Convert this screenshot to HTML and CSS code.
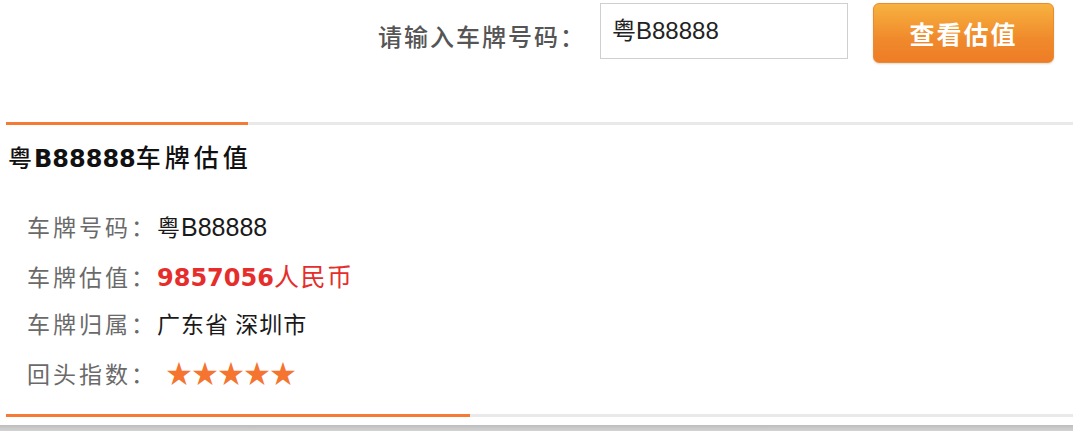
FILE: index.html
```html
<!DOCTYPE html>
<html lang="zh-CN">
<head>
<meta charset="utf-8">
<title>车牌估值</title>
<link rel="stylesheet" href="styles.css">
</head>
<body>
<div class="page">
  <div class="search">
    <span class="search-label">请输入车牌号码：</span>
    <div class="search-input">粤B88888</div>
    <button class="search-btn" type="button">查看估值</button>
  </div>

  <div class="panel">
    <div class="divider"><div class="divider-fill divider-fill-short"></div></div>
    <h1 class="title"><span class="cjk-tight">粤</span><span class="latin-bold">B88888</span><span class="cjk">车牌估值</span></h1>
    <ul class="rows">
      <li class="row"><span class="row-label">车牌号码：</span><span class="row-value"><span class="cjk">粤</span><span class="latin">B88888</span></span></li>
      <li class="row"><span class="row-label">车牌估值：</span><span class="row-value price"><span class="latin-bold">9857056</span><span class="cjk">人民币</span></span></li>
      <li class="row"><span class="row-label">车牌归属：</span><span class="row-value"><span class="cjk">广东省 深圳市</span></span></li>
      <li class="row"><span class="row-label">回头指数：</span><span class="row-value stars">★★★★★</span></li>
    </ul>
    <div class="divider"><div class="divider-fill divider-fill-long"></div></div>
  </div>
  <div class="bottom-edge"></div>
</div>
</body>
</html>
```
FILE: styles.css
```css
* { box-sizing: border-box; }
html, body { margin: 0; padding: 0; background: #fff; }
body {
  font-family: "Liberation Sans", "Noto Sans CJK SC", sans-serif;
  color: #222;
  width: 1080px;
  height: 431px;
  overflow: hidden;
}
.page { width: 1080px; }

.search {
  display: flex;
  justify-content: flex-end;
  align-items: flex-start;
  padding: 3px 26px 0 0;
  height: 122px;
}
.search-label {
  font-family: "Noto Sans CJK SC", sans-serif;
  font-size: 24px;
  font-weight: 500;
  letter-spacing: 2px;
  color: #555;
  line-height: 30px;
  margin-top: 18px;
  margin-right: 14px;
}
.search-input {
  width: 248px;
  height: 56px;
  border: 1px solid #cfcfcf;
  padding-left: 11px;
  font-family: "Liberation Sans", "Noto Sans CJK SC", sans-serif;
  font-size: 24px;
  line-height: 54px;
  color: #222;
  margin-right: 25px;
}
.search-btn {
  width: 181px;
  height: 60px;
  border: 1px solid #ec8a2f;
  border-radius: 6px;
  background: linear-gradient(#f7b23f, #f08a2c 60%, #ee7c26);
  box-shadow: 0 1px 2px rgba(0,0,0,0.15);
  color: #fff;
  font-family: "Noto Sans CJK SC", sans-serif;
  font-weight: 700;
  font-size: 25px;
  letter-spacing: 2px;
  padding: 0;
  cursor: pointer;
}

.panel {
  margin-left: 6px;
  width: 1067px;
}
.divider {
  height: 3px;
  background: #e9e9e9;
}
.divider-fill {
  height: 3px;
  background: #f47a36;
}
.divider-fill-short { width: 242px; }
.divider-fill-long { width: 464px; }

.title {
  margin: 15px 0 0 2px;
  font-size: 24px;
  line-height: 32px;
  font-weight: 700;
  color: #111;
}
.cjk {
  font-family: "Noto Sans CJK SC", sans-serif;
  letter-spacing: 1px;
}
.cjk-tight {
  font-family: "Noto Sans CJK SC", sans-serif;
  font-weight: 500;
  margin-right: 2px;
}
.title .cjk { letter-spacing: 4px; font-weight: 500; font-size: 25px; }
.latin-bold {
  font-family: "DejaVu Sans", sans-serif;
  font-weight: 700;
}
.latin {
  font-family: "Liberation Sans", sans-serif;
  font-size: 25px;
}

.rows {
  list-style: none;
  margin: 27px 0 17px 0;
  padding: 0 0 0 21px;
}
.row {
  display: flex;
  align-items: baseline;
  height: 48.7px;
  line-height: 48.7px;
  font-size: 23px;
}
.row-label {
  font-family: "Noto Sans CJK SC", sans-serif;
  letter-spacing: 3px;
  color: #6a6a6a;
}
.row-value { color: #1a1a1a; }
.price { color: #e52e2b; }
.price .latin-bold { font-size: 24px; }
.price .cjk { font-size: 25px; letter-spacing: 1.5px; }
.stars {
  font-family: "Noto Sans CJK SC", sans-serif;
  color: #f47430;
  font-size: 26px;
  margin-left: 9px;
}

.bottom-edge {
  margin-top: 8px;
  width: 1073px;
  height: 6px;
  background: linear-gradient(#bdbdbd, #d4d4d4);
}
```
